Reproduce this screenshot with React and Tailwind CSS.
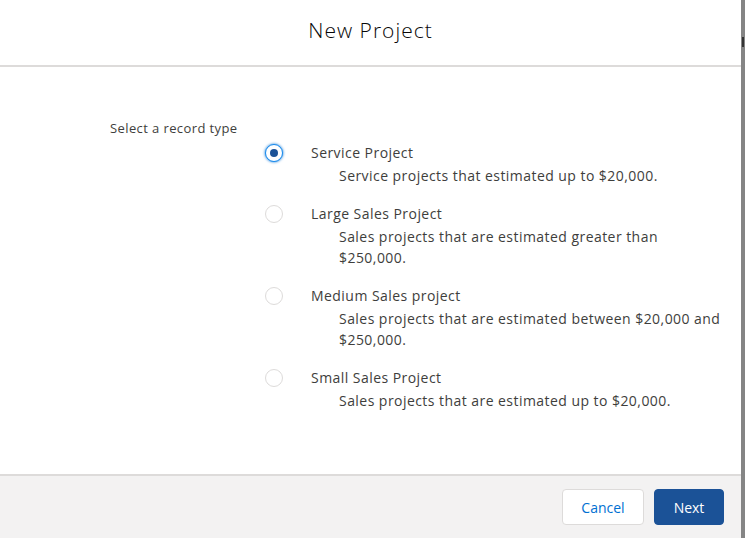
import React from "react";

const options = [
  { label: "Service Project", desc: "Service projects that estimated up to $20,000.", checked: true },
  { label: "Large Sales Project", desc: "Sales projects that are estimated greater than $250,000." },
  { label: "Medium Sales project", desc: "Sales projects that are estimated between $20,000 and $250,000." },
  { label: "Small Sales Project", desc: "Sales projects that are estimated up to $20,000." },
];

function Radio({ checked }) {
  if (checked) {
    return (
      <span className="flex h-[18px] w-[18px] items-center justify-center rounded-full border border-[#1589ee] bg-white shadow-[0_0_3px_#0070d2]">
        <span className="h-[8px] w-[8px] rounded-full bg-[#1b5297]" />
      </span>
    );
  }
  return <span className="h-[18px] w-[18px] rounded-full border border-[#dddbda] bg-white" />;
}

export default function App() {
  return (
    <div className="flex h-[538px] w-[745px] overflow-hidden bg-white text-[#3e3e3c] [font-family:'Open_Sans','Noto_Sans',sans-serif]">
      <div className="flex w-[741px] flex-col bg-white">
        <header className="flex h-[67px] shrink-0 items-center justify-center border-b-2 border-[#dddbda] pb-[4px]">
          <h1 className="text-[21px] font-light tracking-[1px] text-[#080707]">New Project</h1>
        </header>
        <div className="flex-1 pl-[110px] pt-[52px]">
          <div className="text-[13px] leading-[18px] tracking-[0.4px] text-[#3e3e3c]">Select a record type</div>
          <div className="ml-[154px] mt-[5px] flex flex-col gap-[17px]">
            {options.map((o) => (
              <div key={o.label} className="flex items-start">
                <div className="flex h-[21px] w-[20px] items-center justify-center">
                  <Radio checked={o.checked} />
                </div>
                <div className="ml-[27px] flex flex-col text-[14px] tracking-[0.45px]">
                  <div className="leading-[21px]">{o.label}</div>
                  <div className="ml-[28px] mt-[2px] w-[386px] leading-[21px]">{o.desc}</div>
                </div>
              </div>
            ))}
          </div>
        </div>
        <footer className="flex h-[64px] shrink-0 items-center justify-end gap-[10px] border-t-2 border-[#dddbda] bg-[#f3f2f2] pr-[17px]">
          <button className="h-[36px] w-[82px] rounded-[4px] border border-[#dddbda] bg-white text-[14px] text-[#0070d2]">
            Cancel
          </button>
          <button className="h-[36px] w-[70px] rounded-[4px] border border-[#1b5297] bg-[#1b5297] text-[14px] text-white">
            Next
          </button>
        </footer>
      </div>
      <div className="flex w-[4px] flex-col bg-[#858585] pt-[37px]">
        <div className="ml-[1px] h-[10px] w-[2px] bg-[#333333]" />
      </div>
    </div>
  );
}
